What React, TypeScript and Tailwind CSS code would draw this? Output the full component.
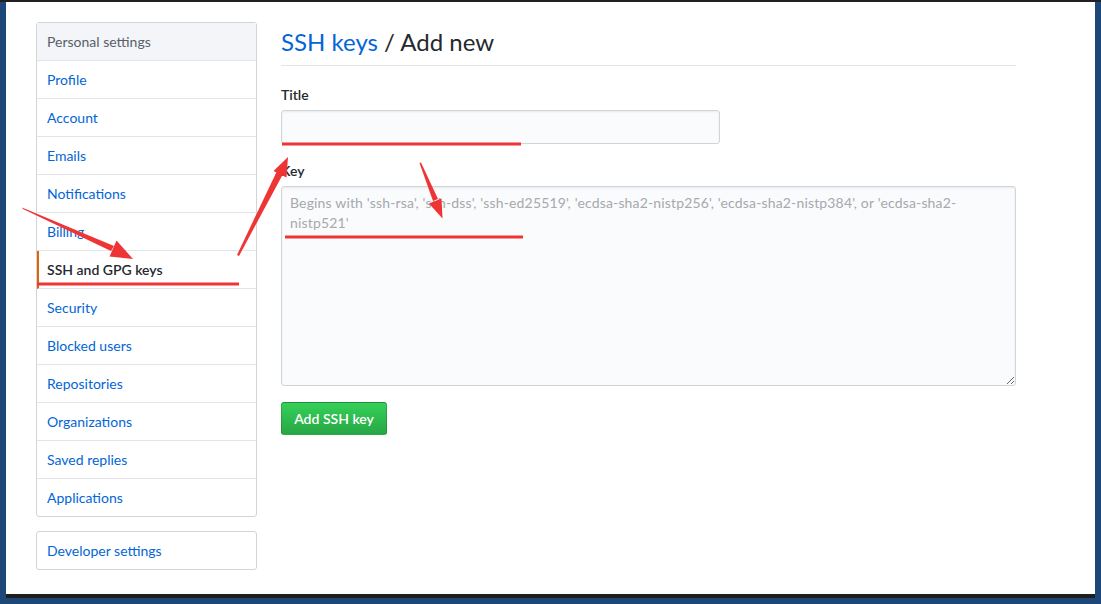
import React from 'react'

const menu = [
  'Profile',
  'Account',
  'Emails',
  'Notifications',
  'Billing',
  'SSH and GPG keys',
  'Security',
  'Blocked users',
  'Repositories',
  'Organizations',
  'Saved replies',
  'Applications',
]

function Sidebar(): JSX.Element {
  return (
    <div className="flex w-[221px] shrink-0 flex-col">
      <nav className="flex flex-col rounded-[3px] border border-[#d1d5da]">
        <h3 className="border-b border-[#e1e4e8] bg-[#f3f5f8] px-[10px] py-2 text-[14px] leading-[21px] font-normal text-[#586069]">
          Personal settings
        </h3>
        {menu.map((item, i) => {
          const active = item === 'SSH and GPG keys'
          return (
            <a
              key={item}
              href="#"
              className={
                (i < menu.length - 1 ? 'border-b border-[#e1e4e8] ' : '') +
                (active
                  ? 'border-l-2 border-l-[#e36209] pl-2 font-semibold text-[#24292e] '
                  : 'pl-[10px] text-[#0366d6] ') +
                'py-2 pr-[10px] text-[14px] leading-[21px]'
              }
            >
              {item}
            </a>
          )
        })}
      </nav>
      <nav className="mt-[14px] flex flex-col rounded-[3px] border border-[#d1d5da]">
        <a href="#" className="px-[10px] py-2 text-[14px] leading-[21px] text-[#0366d6]">
          Developer settings
        </a>
      </nav>
    </div>
  )
}

function Annotations(): JSX.Element {
  const red = '#ee3434'
  return (
    <svg
      className="pointer-events-none absolute left-0 top-0"
      width={1101}
      height={604}
      viewBox="0 0 1101 604"
    >
      {/* underlines */}
      <rect x={282} y={142.5} width={239} height={3} fill={red} />
      <rect x={285} y={235.5} width={238} height={3} fill={red} />
      <rect x={37} y={282.5} width={202} height={3} fill={red} />
      {/* arrow to SSH and GPG keys */}
      <polygon points="22,207.5 114,246 111,251 23,209" fill={red} />
      <polygon points="133,259 109.5,256.5 116.5,240.5" fill={red} />
      {/* arrow up to Key */}
      <polygon points="237,255 277,171 283,174 239,256" fill={red} />
      <polygon points="288,157 273.5,171 286.5,177.5" fill={red} />
      {/* arrow down into textarea */}
      <polygon points="419.5,163 433,201 438,199 421,162.5" fill={red} />
      <polygon points="442.5,218.5 429,203.5 441.5,198.5" fill={red} />
    </svg>
  )
}

export default function App(): JSX.Element {
  return (
    <div
      className="relative flex h-[604px] w-[1101px] flex-col overflow-hidden bg-[#1d4777]"
      style={{ fontFamily: 'Lato, "Noto Sans", sans-serif' }}
    >
      <div className="h-[2px] bg-[#202020]" />
      <div className="flex flex-1">
        <div className="w-[6px] bg-[#1d4777]" />
        <div className="flex flex-1 flex-col bg-white">
          <div className="flex flex-1 gap-6 pl-[30px] pt-5">
            <Sidebar />
            <main className="flex w-[735px] flex-col">
              <div className="mt-[5px] border-b border-[#e1e4e8] pb-2">
                <h2 className="text-[24px] leading-[30px] font-normal text-[#24292e]">
                  <a href="#" className="text-[#0366d6]">
                    SSH keys
                  </a>{' '}
                  / Add new
                </h2>
              </div>
              <form className="flex flex-col">
                <label className="mt-[18px] text-[14px] leading-[21px] font-semibold text-[#24292e]">
                  Title
                </label>
                <input
                  type="text"
                  className="mt-[5px] h-[34px] w-[439px] rounded-[3px] border border-[#d1d5da] bg-[#fafbfc] px-2 text-[14px] shadow-[inset_0_1px_2px_rgba(27,31,35,0.075)] outline-none"
                />
                <label className="mt-[16px] text-[14px] leading-[21px] font-semibold text-[#24292e]">
                  Key
                </label>
                <textarea
                  placeholder="Begins with 'ssh-rsa', 'ssh-dss', 'ssh-ed25519', 'ecdsa-sha2-nistp256', 'ecdsa-sha2-nistp384', or 'ecdsa-sha2-nistp521'"
                  className="mt-[5px] h-[200px] w-[735px] rounded-[3px] border border-[#d1d5da] bg-[#fafbfc] px-2 py-[6px] text-[14px] leading-[20px] tracking-[0.16px] text-[#24292e] shadow-[inset_0_1px_2px_rgba(27,31,35,0.075)] outline-none placeholder:text-[#a6a9ad]"
                />
                <div className="mt-4">
                  <button
                    type="button"
                    className="h-[33px] w-[106px] rounded-[3px] border border-[rgba(27,31,35,0.2)] bg-gradient-to-b from-[#34d058] to-[#28a745] text-[14px] font-semibold text-white"
                  >
                    Add SSH key
                  </button>
                </div>
              </form>
            </main>
          </div>
          <div className="h-[4px] bg-[#1e1e1e]" />
        </div>
        <div className="w-[6px] bg-[#1d4777]" />
      </div>
      <div className="h-[6px] bg-[#1d4777]" />
      <Annotations />
    </div>
  )
}
